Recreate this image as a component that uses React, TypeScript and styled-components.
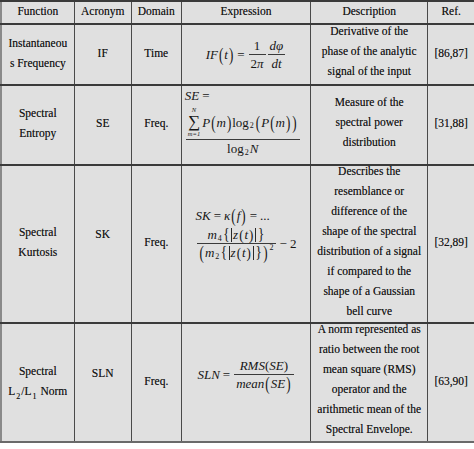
import styled, { createGlobalStyle } from 'styled-components';

const GlobalStyle = createGlobalStyle`
  html, body {
    margin: 0;
    padding: 0;
    background: #ffffff;
  }
  body {
    font-family: "Liberation Serif", "Times New Roman", serif;
    color: #161616;
  }
`

type Row = {
  name: React.ReactNode;
  acronym: string;
  domain: string;
  expression: React.ReactNode;
  description: string[];
  refs: string;
  height: number;
  exprAlign?: 'left' | 'center';
  exprLift?: number;
  acronymLift?: number;
};

const Sheet = styled.table`
  width: 474px;
  table-layout: fixed;
  border-collapse: collapse;
  background: #e0e0e0;
  border-top: 2px solid #3a3a3a;
  border-left: 2px solid #8a8a8a;
  border-bottom: 2px solid #6a6a6a;
  text-shadow: 0 0 0.4px rgba(0, 0, 0, 0.5);

  tbody > tr + tr > td {
    border-top: 2px solid #3a3a3a;
  }
`

const HeadCell = styled.th`
  height: 18px;
  padding: 0 2px 3px;
  font-weight: normal;
  font-size: 11.5px;
  line-height: 15px;
  text-align: center;
  border-bottom: 2px solid #3a3a3a;
  border-right: 1px solid #4a4a4a;
  &:last-child {
    border-right: none;
  }
`

const BodyRow = styled.tr<{ $h: number }>`
  height: ${p => p.$h}px;
`

const Cell = styled.td<{ $align?: 'left' | 'center'; $lift?: number }>`
  padding: 0 3px ${p => p.$lift ?? 4}px;
  font-size: 11.5px;
  line-height: 20px;
  text-align: ${p => p.$align ?? 'center'};
  vertical-align: middle;
  border-right: 1px solid #4a4a4a;
  &:last-child {
    border-right: none;
  }
`

const Lines = styled.div`
  margin-top: -7px;
  line-height: 20px;
  white-space: nowrap;
`

const TextLine = styled.div`
  height: 20px;
`

const Formula = styled.div<{ $gap?: number }>`
  display: inline-flex;
  flex-direction: column;
  align-items: flex-start;
  gap: ${p => p.$gap ?? 2}px;
  font-size: 13px;
  line-height: 15px;
  white-space: nowrap;
  text-shadow: none;
`

const Line = styled.div`
  display: flex;
  align-items: center;
`

const V = styled.i`
  font-style: italic;
`

const Paren = styled.span<{ $tall?: boolean }>`
  display: inline-block;
  transform: scaleY(${p => (p.$tall ? 1.45 : 1.2)});
  margin: 0 1px;
`

const Op = styled.span`
  margin: 0 3px;
`

const Sub = styled.span`
  font-size: 8px;
  position: relative;
  top: 4px;
  margin: 0 1px;
  line-height: 8px;
`

const Sup = styled.span`
  font-size: 8px;
  position: relative;
  top: -5px;
  margin-left: 1px;
  line-height: 8px;
`

const Frac = styled.span`
  display: inline-flex;
  flex-direction: column;
  align-items: center;
  margin: 0 1px;
`

const Num = styled.span`
  display: flex;
  align-items: center;
  padding: 0 2px 1px;
`

const Den = styled.span`
  display: flex;
  align-items: center;
  justify-content: center;
  align-self: stretch;
  padding: 1px 2px 0;
  border-top: 1px solid #3a3a3a;
`

const SumBox = styled.span`
  display: inline-flex;
  flex-direction: column;
  align-items: center;
  line-height: 7px;
  margin-right: 2px;
  padding-bottom: 1px;
`

const Limit = styled.span`
  font-size: 6.5px;
  font-style: italic;
`

const Sigma = styled.span`
  font-size: 17px;
  line-height: 17px;
`

const Brace = styled.span`
  display: inline-block;
  transform: scaleY(1.3);
  margin: 0 0.5px;
`

const Bar = styled.span`
  display: inline-block;
  width: 1px;
  height: 14px;
  background: #2a2a2a;
  margin: 0 1px;
`

const PofM = () => (
  <>
    <V>P</V>
    <Paren $tall>(</Paren>
    <V>m</V>
    <Paren $tall>)</Paren>
  </>
)

const AbsZ = () => (
  <>
    <Brace>{'{'}</Brace>
    <Bar />
    <V>z</V>
    <Paren>(</Paren>
    <V>t</V>
    <Paren>)</Paren>
    <Bar />
    <Brace>{'}'}</Brace>
  </>
)

const rows: Row[] = [
  {
    name: (
      <>
        Instantaneou
        <br />s Frequency
      </>
    ),
    acronym: 'IF',
    domain: 'Time',
    height: 61,
    exprLift: 0,
    expression: (
      <Formula>
        <Line>
          <V>IF</V>
          <Paren $tall>(</Paren>
          <V>t</V>
          <Paren $tall>)</Paren>
          <Op>=</Op>
          <Frac>
            <Num>1</Num>
            <Den>
              2<V>π</V>
            </Den>
          </Frac>
          <Frac>
            <Num>
              <V>dφ</V>
            </Num>
            <Den>
              <V>dt</V>
            </Den>
          </Frac>
        </Line>
      </Formula>
    ),
    description: ['Derivative of the', 'phase of the analytic', 'signal of the input'],
    refs: '[86,87]',
  },
  {
    name: (
      <>
        Spectral
        <br />
        Entropy
      </>
    ),
    acronym: 'SE',
    domain: 'Freq.',
    height: 79,
    exprAlign: 'left',
    exprLift: 8,
    expression: (
      <Formula $gap={3}>
        <Line>
          <V>SE</V>
          <Op>=</Op>
        </Line>
        <Line>
          <Frac>
            <Num>
              <SumBox>
                <Limit>N</Limit>
                <Sigma>∑</Sigma>
                <Limit>m=1</Limit>
              </SumBox>
              <PofM />
              log<Sub>2</Sub>
              <Paren $tall>(</Paren>
              <PofM />
              <Paren $tall>)</Paren>
            </Num>
            <Den>
              log<Sub>2</Sub>
              <V>N</V>
            </Den>
          </Frac>
        </Line>
      </Formula>
    ),
    description: ['Measure of the', 'spectral power', 'distribution'],
    refs: '[31,88]',
  },
  {
    name: (
      <>
        Spectral
        <br />
        Kurtosis
      </>
    ),
    acronym: 'SK',
    domain: 'Freq.',
    height: 158,
    exprLift: 22,
    acronymLift: 20,
    expression: (
      <Formula $gap={4}>
        <Line>
          <V>SK</V>
          <Op>=</Op>
          <V>κ</V>
          <Paren $tall>(</Paren>
          <V>f</V>
          <Paren $tall>)</Paren>
          <Op>=</Op>...
        </Line>
        <Line>
          <Frac>
            <Num>
              <V>m</V>
              <Sub>4</Sub>
              <AbsZ />
            </Num>
            <Den>
              <Paren $tall>(</Paren>
              <V>m</V>
              <Sub>2</Sub>
              <AbsZ />
              <Paren $tall>)</Paren>
              <Sup>2</Sup>
            </Den>
          </Frac>
          <Op>−</Op>2
        </Line>
      </Formula>
    ),
    description: [
      'Describes the',
      'resemblance or',
      'difference of the',
      'shape of the spectral',
      'distribution of a signal',
      'if compared to the',
      'shape of a Gaussian',
      'bell curve',
    ],
    refs: '[32,89]',
  },
  {
    name: (
      <>
        Spectral
        <br />L<Sub>2</Sub>/L<Sub>1</Sub> Norm
      </>
    ),
    acronym: 'SLN',
    domain: 'Freq.',
    height: 119,
    exprLift: 16,
    acronymLift: 20,
    expression: (
      <Formula>
        <Line>
          <V>SLN</V>
          <Op>=</Op>
          <Frac>
            <Num>
              <V>RMS</V>(<V>SE</V>)
            </Num>
            <Den>
              <V>mean</V>
              <Paren $tall>(</Paren>
              <V>SE</V>
              <Paren $tall>)</Paren>
            </Den>
          </Frac>
        </Line>
      </Formula>
    ),
    description: [
      'A norm represented as',
      'ratio between the root',
      'mean square (RMS)',
      'operator and the',
      'arithmetic mean of the',
      'Spectral Envelope.',
    ],
    refs: '[63,90]',
  },
]

const widths = [73, 57, 50, 129, 117, 46]
const headers = ['Function', 'Acronym', 'Domain', 'Expression', 'Description', 'Ref.']

const App = () => (
  <>
    <GlobalStyle />
    <Sheet>
      <colgroup>
        {widths.map((w, i) => (
          <col key={`col-${i}`} style={{ width: w }} />
        ))}
      </colgroup>
      <thead>
        <tr>
          {headers.map(h => (
            <HeadCell key={h}>{h}</HeadCell>
          ))}
        </tr>
      </thead>
      <tbody>
        {rows.map(row => (
          <BodyRow key={row.acronym} $h={row.height}>
            <Cell>{row.name}</Cell>
            <Cell $lift={row.acronymLift}>{row.acronym}</Cell>
            <Cell>{row.domain}</Cell>
            <Cell $align={row.exprAlign} $lift={row.exprLift}>
              {row.expression}
            </Cell>
            <Cell $lift={0}>
              <Lines>
                {row.description.map(line => (
                  <TextLine key={line}>{line}</TextLine>
                ))}
              </Lines>
            </Cell>
            <Cell>{row.refs}</Cell>
          </BodyRow>
        ))}
      </tbody>
    </Sheet>
  </>
)

export default App;
